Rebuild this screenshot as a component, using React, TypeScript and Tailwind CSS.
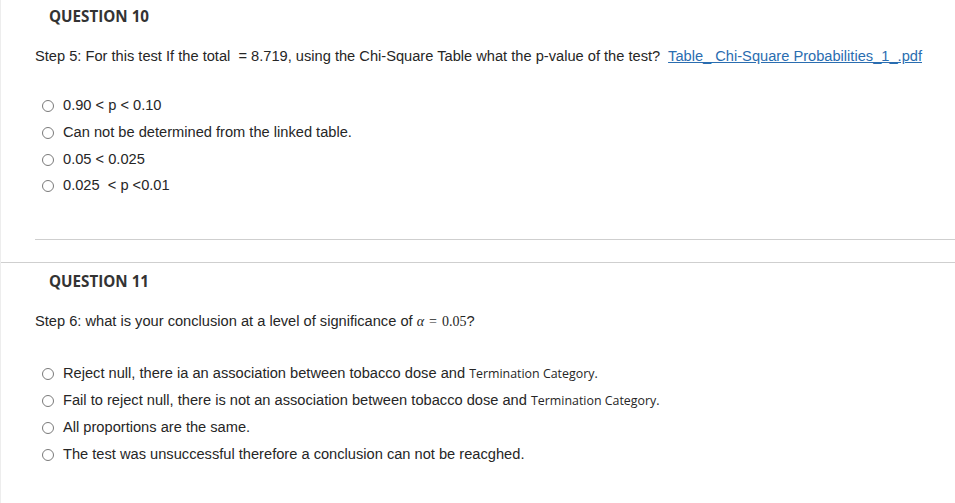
const q10Options = [
  "0.90 < p < 0.10",
  "Can not be determined from the linked table.",
  "0.05 < 0.025",
  "0.025  < p <0.01",
];

function Radio() {
  return (
    <span className="inline-block w-[12px] h-[12px] rounded-full border border-[#7a7a7a] bg-white shrink-0" />
  );
}

function Term() {
  return (
    <span className="font-['Open_Sans',sans-serif] text-[12.4px]">Termination Category.</span>
  );
}

export default function App() {
  return (
    <div className="w-full h-[503px] bg-white border-l border-[#ededed] overflow-hidden font-['Liberation_Sans',Arial,sans-serif] text-[14.65px] text-[#262626]">
      {/* Question 10 */}
      <section className="pl-[34px] pt-[6px]">
        <h2 className="pl-[14px] h-[20px] leading-[20px] font-['Open_Sans',sans-serif] font-bold text-[15.2px] text-[#333]">
          QUESTION 10
        </h2>
        <p className="mt-[20px] leading-[20px] whitespace-pre">
          {"Step 5: For this test If the total  = 8.719, using the Chi-Square Table what the p-value of the test?  "}
          <a href="#" className="text-[#2a6db0] underline">
            Table_ Chi-Square Probabilities_1_.pdf
          </a>
        </p>
        <ul className="mt-[27px] pl-[7px]">
          {q10Options.map((o) => (
            <li key={o} className="h-[26.7px] flex items-center gap-[9px] whitespace-pre">
              <Radio />
              <span>{o}</span>
            </li>
          ))}
        </ul>
        <div className="mt-[39px] border-t border-[#cfcfcf]" />
      </section>

      {/* Question 11 */}
      <section className="mt-[22px] border-t border-[#cfcfcf] pl-[34px] pt-[8px]">
        <h2 className="pl-[14px] h-[20px] leading-[20px] font-['Open_Sans',sans-serif] font-bold text-[15.2px] text-[#333]">
          QUESTION 11
        </h2>
        <p className="mt-[20px] leading-[20px]">
          Step 6: what is your conclusion at a level of significance of{" "}
          <span className="font-['Liberation_Serif',serif] text-[14px]">
            <i>α</i>
            <span className="mx-[5px]">=</span>0.05
          </span>
          ?
        </p>
        <ul className="mt-[29px] pl-[7px]">
          <li className="h-[27px] flex items-center gap-[9px]">
            <Radio />
            <span>
              Reject null, there ia an association between tobacco dose and <Term />
            </span>
          </li>
          <li className="h-[27px] flex items-center gap-[9px]">
            <Radio />
            <span>
              Fail to reject null, there is not an association between tobacco dose and <Term />
            </span>
          </li>
          <li className="h-[27px] flex items-center gap-[9px]">
            <Radio />
            <span>All proportions are the same.</span>
          </li>
          <li className="h-[27px] flex items-center gap-[9px]">
            <Radio />
            <span>The test was unsuccessful therefore a conclusion can not be reacghed.</span>
          </li>
        </ul>
      </section>
    </div>
  );
}
